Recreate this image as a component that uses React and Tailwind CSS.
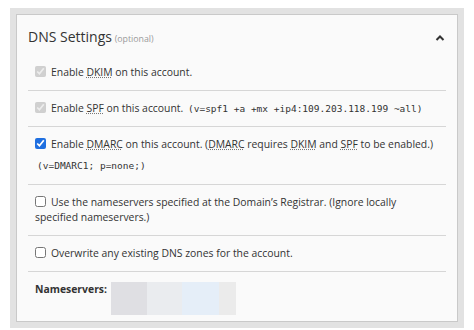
import React from "react";

const Abbr = ({ children }) => (
  <span className="underline decoration-dotted decoration-[#777] underline-offset-[1px]">{children}</span>
);

function CheckRow({ checked, disabled, children, extra }) {
  return (
    <div className="border-b border-[#d6d6d6] py-[10px] pl-[7px]">
      <label className="block leading-[15px]">
        <input
          type="checkbox"
          defaultChecked={checked}
          disabled={disabled}
          className="mr-[5px] h-[11px] w-[11px] align-[-1px] accent-[#1f6fe0]"
        />
        {children}
      </label>
      {extra}
    </div>
  );
}

export default function App() {
  return (
    <div className="bg-white px-[10px] pt-[8px] pb-[5px]" style={{ fontFamily: "'Open Sans', sans-serif" }}>
      <div className="bg-[#e2e2e2] p-[6px]">
        <div className="border border-[#c9c9c9] bg-[#fafafa] px-[11px] pb-[6px] text-[10.4px] text-[#333]">
          {/* Header */}
          <div className="flex items-center justify-between pt-[11px] pb-[5px] leading-[22px]">
            <div>
              <span className="text-[14px] text-[#333]">DNS Settings</span>{" "}
              <span className="text-[8.8px] text-[#9a9a9a]">(optional)</span>
            </div>
            <svg width="10" height="8" viewBox="0 0 10 8" className="mr-[1px]">
              <polyline points="1.5,6 5,2.5 8.5,6" fill="none" stroke="#333" strokeWidth="2" />
            </svg>
          </div>

          <CheckRow checked disabled>
            Enable <Abbr>DKIM</Abbr> on this account.
          </CheckRow>

          <CheckRow checked disabled>
            Enable <Abbr>SPF</Abbr> on this account.{" "}
            <span className="ml-[2px] font-['DejaVu_Sans_Mono',monospace] text-[9.5px]">
              (v=spf1 +a +mx +ip4:109.203.118.199 ~all)
            </span>
          </CheckRow>

          <CheckRow
            checked
            extra={
              <div className="mt-[6px] mb-[1px] pl-[2px] font-['DejaVu_Sans_Mono',monospace] text-[9.5px] leading-[15px]">
                (v=DMARC1; p=none;)
              </div>
            }
          >
            Enable <Abbr>DMARC</Abbr> on this account. (<Abbr>DMARC</Abbr> requires <Abbr>DKIM</Abbr> and{" "}
            <Abbr>SPF</Abbr> to be enabled.)
          </CheckRow>

          <CheckRow>
            Use the nameservers specified at the Domain’s Registrar. (Ignore locally
            <br />
            specified nameservers.)
          </CheckRow>

          <CheckRow>Overwrite any existing DNS zones for the account.</CheckRow>

          {/* Nameservers */}
          <div className="flex items-start gap-[4px] pt-[10px] pl-[7px]">
            <span className="font-bold leading-[15px]">Nameservers:</span>
            <div className="flex h-[33px] w-[125px]">
              <div className="w-[36px] bg-[#dfdfe3]" />
              <div className="w-[35px] bg-[#eaecef]" />
              <div className="w-[37px] bg-[#e5eef8]" />
              <div className="flex-1 bg-[#ebebeb]" />
            </div>
          </div>
        </div>
      </div>
    </div>
  );
}
